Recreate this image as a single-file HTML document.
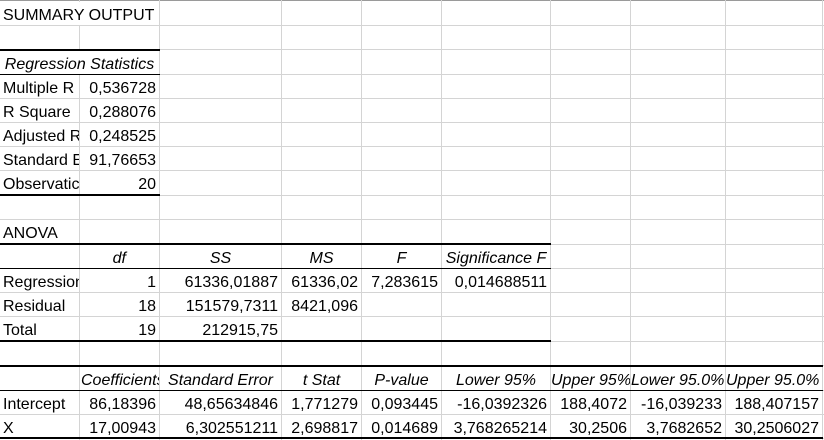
<!DOCTYPE html>
<html><head><meta charset="utf-8"><style>
body{margin:0;width:824px;height:440px;overflow:hidden;background:#fff;position:relative;font-family:"Liberation Sans",Calibri,sans-serif;font-size:16px;color:#000}
.v{position:absolute;top:0;width:1px;height:440px;background:#d4d4d4}
.h{position:absolute;left:0;width:824px;height:1px;background:#d4d4d4}
.k{position:absolute;background:#000}
.c{position:absolute;height:23px;line-height:27px;overflow:hidden;white-space:nowrap;padding:0 3px;box-sizing:border-box}
.r{text-align:right}.m{text-align:center}.i{font-style:italic}
.w{background:#fff}
</style></head><body>
<div class="h" style="top:0;background:#9a9a9a"></div>
<div class="v" style="left:79px"></div><div class="v" style="left:159px"></div><div class="v" style="left:281px"></div><div class="v" style="left:361px"></div><div class="v" style="left:441px"></div><div class="v" style="left:550px"></div><div class="v" style="left:630px"></div><div class="v" style="left:725px"></div><div class="v" style="left:822px"></div>
<div class="h" style="top:25px"></div><div class="h" style="top:49px"></div><div class="h" style="top:74px"></div><div class="h" style="top:98px"></div><div class="h" style="top:122px"></div><div class="h" style="top:146px"></div><div class="h" style="top:170px"></div><div class="h" style="top:195px"></div><div class="h" style="top:219px"></div><div class="h" style="top:244px"></div><div class="h" style="top:268px"></div><div class="h" style="top:292px"></div><div class="h" style="top:316px"></div><div class="h" style="top:341px"></div><div class="h" style="top:365px"></div><div class="h" style="top:390px"></div><div class="h" style="top:414px"></div><div class="h" style="top:438px"></div>

<div class="c w" style="left:0;top:2px;width:159px">SUMMARY OUTPUT</div>
<div class="c w m i" style="left:0;top:51px;width:159px;padding:0">Regression Statistics</div>
<div class="c w" style="left:0;top:75px;width:79px">Multiple R</div><div class="c r w" style="left:80px;top:75px;width:79px">0,536728</div>
<div class="c w" style="left:0;top:99px;width:79px">R Square</div><div class="c r w" style="left:80px;top:99px;width:79px">0,288076</div>
<div class="c w" style="left:0;top:123px;width:79px">Adjusted R</div><div class="c r w" style="left:80px;top:123px;width:79px">0,248525</div>
<div class="c w" style="left:0;top:147px;width:79px">Standard E</div><div class="c r w" style="left:80px;top:147px;width:79px">91,76653</div>
<div class="c w" style="left:0;top:171px;width:79px">Observatic</div><div class="c r w" style="left:80px;top:171px;width:79px">20</div>

<div class="c w" style="left:0;top:220px;width:79px">ANOVA</div>
<div class="c i" style="left:80px;top:245px;width:79px;text-align:right;padding-right:33px">df</div>
<div class="c m i" style="left:160px;top:245px;width:121px">SS</div>
<div class="c m i" style="left:282px;top:245px;width:79px">MS</div>
<div class="c m i" style="left:362px;top:245px;width:79px">F</div>
<div class="c m i" style="left:442px;top:245px;width:108px;padding:0">Significance F</div>

<div class="c" style="left:0;top:269px;width:79px">Regression</div><div class="c r" style="left:80px;top:269px;width:79px">1</div><div class="c r" style="left:160px;top:269px;width:121px">61336,01887</div><div class="c r" style="left:282px;top:269px;width:79px">61336,02</div><div class="c r" style="left:362px;top:269px;width:79px">7,283615</div><div class="c r" style="left:442px;top:269px;width:108px">0,014688511</div>
<div class="c" style="left:0;top:293px;width:79px">Residual</div><div class="c r" style="left:80px;top:293px;width:79px">18</div><div class="c r" style="left:160px;top:293px;width:121px">151579,7311</div><div class="c r" style="left:282px;top:293px;width:79px">8421,096</div>
<div class="c" style="left:0;top:317px;width:79px">Total</div><div class="c r" style="left:80px;top:317px;width:79px">19</div><div class="c r" style="left:160px;top:317px;width:121px">212915,75</div>

<div class="c i" style="left:80px;top:367px;width:79px;padding:0 0 0 1px;text-align:left">Coefficients</div>
<div class="c m i" style="left:160px;top:367px;width:121px;padding:0">Standard Error</div>
<div class="c m i" style="left:282px;top:367px;width:79px">t Stat</div>
<div class="c m i" style="left:362px;top:367px;width:79px">P-value</div>
<div class="c m i" style="left:442px;top:367px;width:108px">Lower 95%</div>
<div class="c m i" style="left:551px;top:367px;width:79px;padding:0;text-align:left">Upper 95%</div>
<div class="c m i" style="left:631px;top:367px;width:94px;padding:0;text-align:left">Lower 95.0%</div>
<div class="c m i" style="left:726px;top:367px;width:96px;padding:0;text-align:left">Upper 95.0%</div>

<div class="c" style="left:0;top:391px;width:79px">Intercept</div><div class="c r" style="left:80px;top:391px;width:79px">86,18396</div><div class="c r" style="left:160px;top:391px;width:121px">48,65634846</div><div class="c r" style="left:282px;top:391px;width:79px">1,771279</div><div class="c r" style="left:362px;top:391px;width:79px">0,093445</div><div class="c r" style="left:442px;top:391px;width:108px">-16,0392326</div><div class="c r" style="left:551px;top:391px;width:79px">188,4072</div><div class="c r" style="left:631px;top:391px;width:94px">-16,039233</div><div class="c r" style="left:726px;top:391px;width:96px">188,407157</div>
<div class="c" style="left:0;top:415px;width:79px">X</div><div class="c r" style="left:80px;top:415px;width:79px">17,00943</div><div class="c r" style="left:160px;top:415px;width:121px">6,302551211</div><div class="c r" style="left:282px;top:415px;width:79px">2,698817</div><div class="c r" style="left:362px;top:415px;width:79px">0,014689</div><div class="c r" style="left:442px;top:415px;width:108px">3,768265214</div><div class="c r" style="left:551px;top:415px;width:79px">30,2506</div><div class="c r" style="left:631px;top:415px;width:94px">3,7682652</div><div class="c r" style="left:726px;top:415px;width:96px">30,2506027</div>

<div class="k" style="left:0;top:49px;width:160px;height:2px"></div>
<div class="k" style="left:0;top:74px;width:160px;height:1px"></div>
<div class="k" style="left:0;top:194px;width:160px;height:2px"></div>
<div class="k" style="left:0;top:243px;width:551px;height:2px"></div>
<div class="k" style="left:0;top:268px;width:551px;height:1px"></div>
<div class="k" style="left:0;top:340px;width:551px;height:2px"></div>
<div class="k" style="left:0;top:365px;width:823px;height:2px"></div>
<div class="k" style="left:0;top:390px;width:823px;height:1px"></div>
<div class="k" style="left:0;top:437px;width:823px;height:2px"></div>
</body></html>
